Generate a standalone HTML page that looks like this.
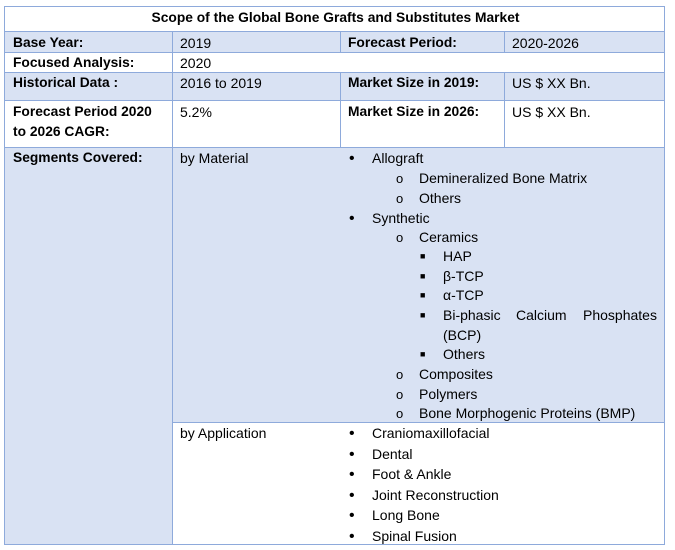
<!DOCTYPE html>
<html><head><meta charset="utf-8"><style>
*{margin:0;padding:0;box-sizing:border-box}
body{width:675px;height:550px;background:#fff;position:relative;overflow:hidden;font-family:"Liberation Sans",sans-serif;font-size:14px;color:#000}
.f{position:absolute;background:#d9e2f3}
.h{position:absolute;background:#8eaadb;height:1px}
.v{position:absolute;background:#8eaadb;width:1px}
.t{position:absolute;white-space:nowrap;line-height:16px}
.b{font-weight:bold;font-size:13.8px}
.d{font-size:16px;margin-top:2px}
.o{font-size:13px}
</style></head><body>
<div class="f" style="left:4px;top:31px;width:661px;height:21px"></div>
<div class="f" style="left:4px;top:72px;width:661px;height:28px"></div>
<div class="f" style="left:4px;top:147px;width:661px;height:275px"></div>
<div class="f" style="left:4px;top:422px;width:168px;height:123px"></div>
<div class="h" style="left:4px;top:6px;width:661px"></div>
<div class="h" style="left:4px;top:31px;width:661px"></div>
<div class="h" style="left:4px;top:52px;width:661px"></div>
<div class="h" style="left:4px;top:72px;width:661px"></div>
<div class="h" style="left:4px;top:100px;width:661px"></div>
<div class="h" style="left:4px;top:147px;width:661px"></div>
<div class="h" style="left:172px;top:422px;width:493px"></div>
<div class="h" style="left:4px;top:544px;width:661px"></div>
<div class="v" style="left:4px;top:6px;height:539px"></div>
<div class="v" style="left:664px;top:6px;height:539px"></div>
<div class="v" style="left:172px;top:31px;height:514px"></div>
<div class="v" style="left:340px;top:31px;height:21px"></div>
<div class="v" style="left:504px;top:31px;height:21px"></div>
<div class="v" style="left:340px;top:72px;height:75px"></div>
<div class="v" style="left:504px;top:72px;height:75px"></div>
<div class="t b" style="left:0;width:671px;text-align:center;top:10px">Scope of the Global Bone Grafts and Substitutes Market</div>
<div class="t b" style="left:13px;top:35px">Base Year:</div>
<div class="t" style="left:180px;top:35px">2019</div>
<div class="t b" style="left:348px;top:35px">Forecast Period:</div>
<div class="t" style="left:512px;top:35px">2020-2026</div>
<div class="t b" style="left:13px;top:55px">Focused Analysis:</div>
<div class="t" style="left:180px;top:55px">2020</div>
<div class="t b" style="left:13px;top:75px">Historical Data :</div>
<div class="t" style="left:180px;top:75px">2016 to 2019</div>
<div class="t b" style="left:348px;top:75px">Market Size in 2019:</div>
<div class="t" style="left:512px;top:75px">US $ XX Bn.</div>
<div class="t b" style="left:13px;top:104px">Forecast Period 2020</div>
<div class="t b" style="left:13px;top:124px">to 2026 CAGR:</div>
<div class="t" style="left:180px;top:104px">5.2%</div>
<div class="t b" style="left:348px;top:104px">Market Size in 2026:</div>
<div class="t" style="left:512px;top:104px">US $ XX Bn.</div>
<div class="t b" style="left:13px;top:150px">Segments Covered:</div>
<div class="t" style="left:180px;top:150px">by Material</div>
<div class="t" style="left:180px;top:425px">by Application</div>

<div class="t d" style="left:349px;top:149px">•</div><div class="t" style="left:372px;top:150px">Allograft</div>
<div class="t o" style="left:396px;top:171px">o</div><div class="t" style="left:419px;top:170px">Demineralized Bone Matrix</div>
<div class="t o" style="left:396px;top:191px">o</div><div class="t" style="left:419px;top:190px">Others</div>
<div class="t d" style="left:349px;top:209px">•</div><div class="t" style="left:372px;top:210px">Synthetic</div>
<div class="t o" style="left:396px;top:230px">o</div><div class="t" style="left:419px;top:229px">Ceramics</div>
<div class="t" style="left:420px;top:248px;font-size:9px">■</div><div class="t" style="left:443px;top:248px">HAP</div>
<div class="t" style="left:420px;top:268px;font-size:9px">■</div><div class="t" style="left:443px;top:268px">β-TCP</div>
<div class="t" style="left:420px;top:287px;font-size:9px">■</div><div class="t" style="left:443px;top:287px">α-TCP</div>
<div class="t" style="left:420px;top:307px;font-size:9px">■</div>
<div class="t" style="left:443px;top:307px">Bi-phasic</div><div class="t" style="left:516px;top:307px">Calcium</div><div class="t" style="left:583px;top:307px">Phosphates</div>
<div class="t" style="left:443px;top:327px">(BCP)</div>
<div class="t" style="left:420px;top:346px;font-size:9px">■</div><div class="t" style="left:443px;top:346px">Others</div>
<div class="t o" style="left:396px;top:367px">o</div><div class="t" style="left:419px;top:366px">Composites</div>
<div class="t o" style="left:396px;top:387px">o</div><div class="t" style="left:419px;top:386px">Polymers</div>
<div class="t o" style="left:396px;top:406px">o</div><div class="t" style="left:419px;top:405px">Bone Morphogenic Proteins (BMP)</div>

<div class="t d" style="left:349px;top:424px">•</div><div class="t" style="left:372px;top:425px">Craniomaxillofacial</div>
<div class="t d" style="left:349px;top:445px">•</div><div class="t" style="left:372px;top:446px">Dental</div>
<div class="t d" style="left:349px;top:465px">•</div><div class="t" style="left:372px;top:466px">Foot &amp; Ankle</div>
<div class="t d" style="left:349px;top:486px">•</div><div class="t" style="left:372px;top:487px">Joint Reconstruction</div>
<div class="t d" style="left:349px;top:506px">•</div><div class="t" style="left:372px;top:507px">Long Bone</div>
<div class="t d" style="left:349px;top:527px">•</div><div class="t" style="left:372px;top:528px">Spinal Fusion</div>
</body></html>
